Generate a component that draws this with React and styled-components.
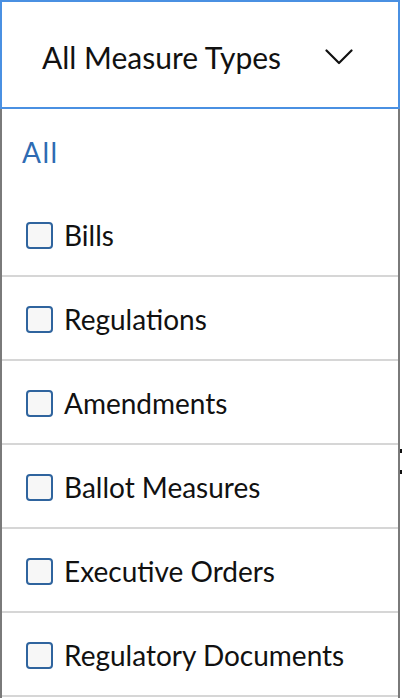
import React, { useState } from 'react';
import styled, { createGlobalStyle } from 'styled-components';

const GlobalStyle = createGlobalStyle`
  html, body {
    margin: 0;
    padding: 0;
    background: #ffffff;
  }
  body {
    font-family: Lato, "Noto Sans", sans-serif;
    color: #111111;
  }
`;

const Page = styled.div`
  width: 402px;
  height: 698px;
  overflow: hidden;
  display: flex;
  background: #ffffff;
`;

const Dropdown = styled.div`
  width: 400px;
  display: flex;
  flex-direction: column;
`;

const Trigger = styled.button`
  height: 109px;
  box-sizing: border-box;
  border: 2px solid #4a90e2;
  background: #ffffff;
  display: flex;
  align-items: center;
  justify-content: space-between;
  padding: 4px 45px 0 40px;
  font-family: Lato, "Noto Sans", sans-serif;
  font-size: 30px;
  color: #111111;
  cursor: pointer;
  text-align: left;
`;

const Menu = styled.ul`
  list-style: none;
  margin: 0;
  padding: 0;
  border-left: 2px solid #7a7a7a;
  border-right: 2px solid #7a7a7a;
  flex: 1;
`;

const Row = styled.li`
  height: 84px;
  box-sizing: border-box;
  display: flex;
  align-items: center;
  gap: 11px;
  padding-left: ${(p) => (p.$plain ? '20px' : '24px')};
  padding-top: 2px;
  border-bottom: ${(p) => (p.$plain ? 'none' : '2px solid #d6d6d6')};
  font-size: 28px;
  letter-spacing: ${(p) => (p.$plain ? '1.5px' : '0')};
  color: ${(p) => (p.$plain ? '#2e6bb3' : '#111111')};
`;

const Box = styled.span`
  width: 27px;
  height: 27px;
  box-sizing: border-box;
  border: 2px solid #2f649e;
  border-radius: 4px;
  background: ${(p) => (p.$checked ? '#2f649e' : '#f7f7f7')};
  flex-shrink: 0;
`;

const Gutter = styled.div`
  flex: 1;
  display: flex;
  flex-direction: column;
  padding-top: 449px;
  gap: 17px;
`;

const Tick = styled.span`
  width: 2px;
  height: 4px;
  background: #111;
`;

const Chevron = () => (
  <svg width="28" height="16" viewBox="0 0 28 16" fill="none">
    <path d="M1.5 1.5 L14 14 L26.5 1.5" stroke="#111" strokeWidth="2.2" strokeLinecap="round" strokeLinejoin="round" />
  </svg>
);

const types = [
  'Bills',
  'Regulations',
  'Amendments',
  'Ballot Measures',
  'Executive Orders',
  'Regulatory Documents',
];

export default function App() {
  const [checked, setChecked] = useState({});
  const toggle = (t) => setChecked((c) => ({ ...c, [t]: !c[t] }));

  return (
    <Page>
      <GlobalStyle />
      <Dropdown>
        <Trigger>
          All Measure Types
          <Chevron />
        </Trigger>
        <Menu>
          <Row $plain>All</Row>
          {types.map((t) => (
            <Row key={t} onClick={() => toggle(t)}>
              <Box $checked={checked[t]} />
              {t}
            </Row>
          ))}
        </Menu>
      </Dropdown>
      <Gutter>
        <Tick />
        <Tick />
      </Gutter>
    </Page>
  );
}
